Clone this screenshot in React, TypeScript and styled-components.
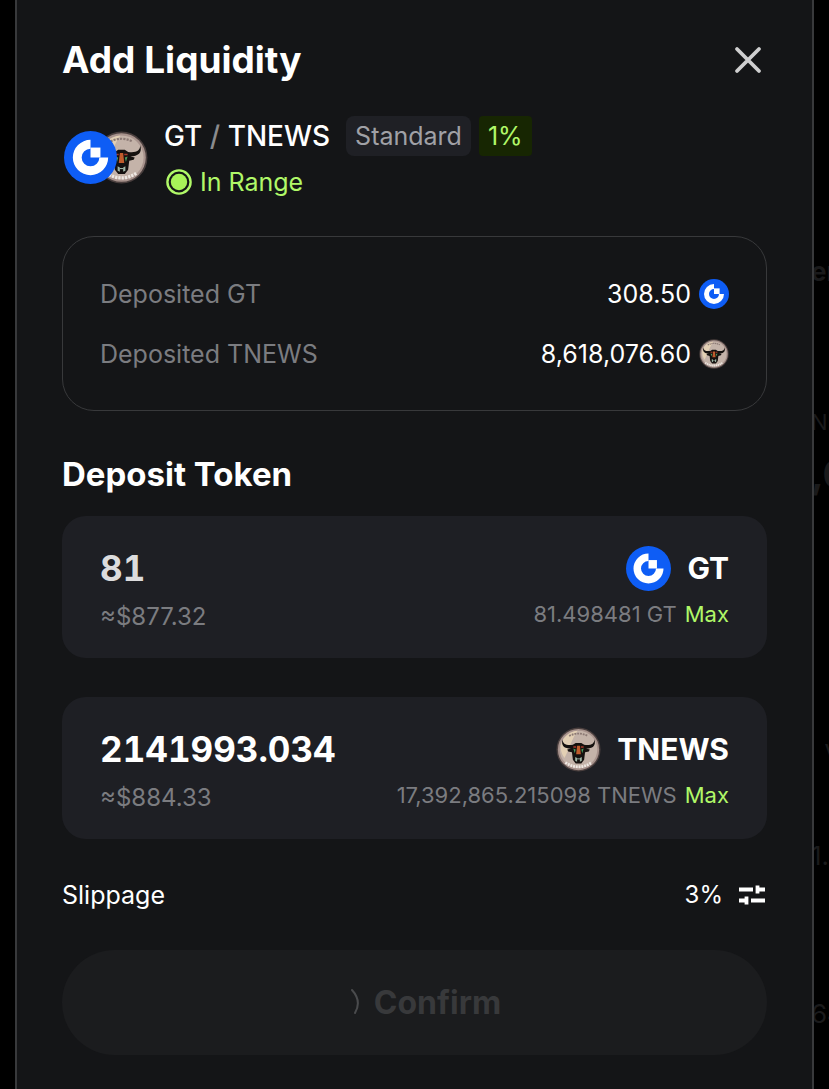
import React from "react";
import styled, { createGlobalStyle, css } from "styled-components";

const GlobalStyle = createGlobalStyle`
  *, *::before, *::after { box-sizing: border-box; }
  body {
    margin: 0;
    background: #000;
    color: #fff;
    font-family: Inter, "Liberation Sans", Arial, sans-serif;
  }
  h1, h2, p, dl, dt, dd { margin: 0; }
  button, input { font-family: inherit; }
`;

const Page = styled.div`
  position: relative;
  min-height: 100vh;
  padding: 0 15px;
  overflow: hidden;
`;

const Modal = styled.main`
  min-height: 100vh;
  padding: 36px 45px 32px;
  background: #141517;
  border: solid #38393b;
  border-width: 0 2px;
`;

const Ghost = styled.span<{ $top: number; $size: number; $bold?: boolean }>`
  position: absolute;
  left: calc(100% - 18px);
  top: ${(p) => p.$top}px;
  z-index: -1;
  font-size: ${(p) => p.$size}px;
  font-weight: ${(p) => (p.$bold ? 700 : 400)};
  line-height: 40px;
  white-space: pre;
  color: #1a1a1b;
`;

const Header = styled.header`
  display: flex;
  align-items: center;
  justify-content: space-between;
  height: 48px;
`;

const Title = styled.h1`
  font-size: 37px;
  line-height: 48px;
  font-weight: 700;
`;

const IconButton = styled.button`
  display: flex;
  padding: 0;
  border: 0;
  background: none;
  color: #fff;
  cursor: pointer;
`;

const CloseButton = styled(IconButton)`
  padding: 4px;
  color: #cfcfd0;
`;

const Pair = styled.section`
  display: flex;
  align-items: center;
  gap: 16px;
  margin-top: 32px;
`;

const PairIcons = styled.div`
  display: flex;
  align-items: center;
  padding: 0 0 2px 2px;
  & > svg:first-child { z-index: 1; }
  & > svg + svg { margin-left: -22px; }
`;

const PairInfo = styled.div`
  display: flex;
  flex-direction: column;
  gap: 8px;
`;

const PairLine = styled.div`
  display: flex;
  align-items: center;
  gap: 8px;
  height: 40px;
`;

const PairName = styled.p`
  margin-right: 8px;
  font-size: 28px;
  line-height: 40px;
  font-weight: 500;
`;

const Slash = styled.span`
  color: #8a8b8e;
`;

const Tag = styled.span<{ $accent?: boolean }>`
  padding: 0 9px;
  border-radius: 8px;
  font-size: 25px;
  line-height: 40px;
  color: #a0a1a6;
  background: #1f2025;
  ${(p) =>
    p.$accent &&
    css`
      border-radius: 4px;
      color: #b0f868;
      background: #172602;
    `}
`;

const Status = styled.p`
  display: flex;
  align-items: center;
  gap: 8px;
  padding-left: 2px;
  font-size: 25px;
  line-height: 36px;
  color: #b0f868;
`;

const Summary = styled.dl`
  display: flex;
  flex-direction: column;
  gap: 24px;
  margin-top: 36px;
  padding: 39px 37px 38px;
  border: 1px solid #38393b;
  border-radius: 32px;
`;

const SummaryRow = styled.div`
  display: flex;
  align-items: center;
  justify-content: space-between;
  font-size: 25px;
  line-height: 36px;
`;

const SummaryLabel = styled.dt`
  color: #7b7c80;
`;

const SummaryValue = styled.dd`
  display: flex;
  align-items: center;
  gap: 8px;
`;

const SectionTitle = styled.h2`
  margin: 39px 0 18px;
  font-size: 33px;
  line-height: 48px;
  font-weight: 700;
`;

const Deposits = styled.div`
  display: flex;
  flex-direction: column;
  gap: 39px;
`;

const DepositCard = styled.div`
  display: flex;
  flex-direction: column;
  gap: 4px;
  padding: 28px 38px 20px;
  border-radius: 24px;
  background: #1e1f24;
`;

const DepositRow = styled.div`
  display: flex;
  align-items: flex-start;
  justify-content: space-between;
  gap: 16px;
`;

const Amount = styled.input<{ $dim?: boolean }>`
  flex: 1;
  min-width: 0;
  height: 48px;
  padding: 0;
  border: 0;
  outline: 0;
  background: none;
  font-size: 35px;
  font-weight: 700;
  font-variant-numeric: tabular-nums;
  color: ${(p) => (p.$dim ? "#dcdcdd" : "#fff")};
`;

const Token = styled.div`
  display: flex;
  align-items: center;
  gap: 16px;
  font-size: 30px;
  line-height: 48px;
  font-weight: 700;
`;

const Fiat = styled.span`
  font-size: 24px;
  line-height: 42px;
  color: #7b7c80;
`;

const Balance = styled.div`
  display: flex;
  align-items: center;
  gap: 8px;
  font-size: 22px;
  line-height: 36px;
  color: #7b7c80;
`;

const MaxButton = styled.button`
  padding: 0;
  border: 0;
  background: none;
  font-size: 22px;
  line-height: 30px;
  color: #b0f868;
  cursor: pointer;
`;

const Slippage = styled.section`
  display: flex;
  align-items: center;
  justify-content: space-between;
  margin-top: 38px;
  font-size: 25px;
  line-height: 36px;
`;

const SlippageValue = styled.div`
  display: flex;
  align-items: center;
  gap: 16px;
  font-size: 24px;
`;

const Confirm = styled.button`
  display: flex;
  align-items: center;
  justify-content: center;
  gap: 14px;
  width: 100%;
  height: 105px;
  margin-top: 37px;
  border: 0;
  border-radius: 53px;
  background: #1b1c1e;
  color: #38393b;
  font-size: 32px;
  font-weight: 700;
`;

type IconProps = { size: number };

const GateIcon = ({ size }: IconProps) => (
  <svg width={size} height={size} viewBox="0 0 48 48" aria-hidden="true">
    <circle cx="24" cy="24" r="24" fill="#0e5df5" />
    <path d="M24 8a16 16 0 1 0 16 16h-8a8 8 0 1 1-8-8z" fill="#fff" />
    <path d="M24 15h9v9h-9z" fill="#fff" />
  </svg>
);

const BullIcon = ({ size }: IconProps) => (
  <svg width={size} height={size} viewBox="0 0 48 48" aria-hidden="true">
    <circle cx="24" cy="24" r="23.500" fill="#4a3f3e" />
    <circle cx="24" cy="24" r="22" fill="#a8938d" />
    <circle cx="24" cy="24" r="20" fill="#c4b3a9" />
    <path d="M5 20a20 20 0 0 1 18-16c-6 8-9 20-14 29a20 20 0 0 1-4-13z" fill="#e3d0b4" />
    <path d="M14 9.500q10-5 20 0" fill="none" stroke="#8c7a75" strokeWidth="2" strokeDasharray="2 1" />
    <path d="M10 38q14 9 28 0" fill="none" stroke="#efe9e4" strokeWidth="3" strokeDasharray="2 1" />
    <path d="M7 13c0 5 4 7 11 6l3-2h6l3 2c7 1 11-1 11-6 2 7-2 10-9 10l4 1-1 2-4 1-1 8-3 4h-6l-3-4-1-8-4-1-1-2 4-1C9 23 5 20 7 13z" fill="#15110f" />
    <path d="M22.500 20h3l1 9h-5z" fill="#c05c2c" />
    <path d="M18.500 23l2.500 1-1 4zM29.500 23l-2.500 1 1 4z" fill="#4a9a60" />
    <path d="M18.500 20.500h3v1.500h-3zM26.500 20.500h3v1.500h-3z" fill="#a83a2c" />
    <path d="M20.500 32l2 1v4l-2-1zM27.500 32l-2 1v4l2-1z" fill="#9eb5a6" />
    <path d="M22.500 33.500h3v1h-3z" fill="#9eb5a6" />
  </svg>
);

const RangeIcon = () => (
  <svg width="26" height="26" viewBox="0 0 26 26" aria-hidden="true">
    <circle cx="13" cy="13" r="11.6" fill="none" stroke="#b0f868" strokeWidth="2.4" />
    <circle cx="13" cy="13" r="8.2" fill="#a8f358" />
  </svg>
);

const CloseIcon = () => (
  <svg width="30" height="30" viewBox="0 0 30 30" aria-hidden="true">
    <path d="M4 4l22 22M26 4L4 26" stroke="currentColor" strokeWidth="3.8" strokeLinecap="round" />
  </svg>
);

const SlidersIcon = () => (
  <svg width="28" height="24" viewBox="0 0 28 24" aria-hidden="true">
    <path
      d="M0 6.500h14M18.500 2.500v8M19 6.500h7M0 17.500h7M7.500 13.500v8M12 17.500h14"
      fill="none"
      stroke="currentColor"
      strokeWidth="3.8"
    />
  </svg>
);

const SpinnerIcon = () => (
  <svg width="32" height="32" viewBox="0 0 32 32" aria-hidden="true">
    <path d="M24 3q10 11 3 23" fill="none" stroke="#4a4b4d" strokeWidth="2" strokeLinecap="round" />
  </svg>
);

const backdrop = [
  { text: "er", top: 252, size: 26, bold: true },
  { text: "N", top: 402, size: 22 },
  { text: ",0", top: 454, size: 38, bold: true },
  { text: "  V", top: 734, size: 24 },
  { text: "1.", top: 836, size: 26 },
  { text: "64", top: 994, size: 26 },
];

const deposits = [
  { symbol: "GT", Icon: GateIcon, amount: "81", dim: true, fiat: "≈$877.32", balance: "81.498481 GT" },
  { symbol: "TNEWS", Icon: BullIcon, amount: "2141993.034", dim: false, fiat: "≈$884.33", balance: "17,392,865.215098 TNEWS" },
];

export default function App() {
  return (
    <Page>
      <GlobalStyle />
      {backdrop.map(({ text, top, size, bold }) => (
        <Ghost key={top} $top={top} $size={size} $bold={bold} aria-hidden="true">
          {text}
        </Ghost>
      ))}
      <Modal>
        <Header>
          <Title>Add Liquidity</Title>
          <CloseButton type="button" aria-label="Close">
            <CloseIcon />
          </CloseButton>
        </Header>

        <Pair>
          <PairIcons>
            <GateIcon size={53} />
            <BullIcon size={53} />
          </PairIcons>
          <PairInfo>
            <PairLine>
              <PairName>
                GT <Slash>/</Slash> TNEWS
              </PairName>
              <Tag>Standard</Tag>
              <Tag $accent>1%</Tag>
            </PairLine>
            <Status>
              <RangeIcon />
              In Range
            </Status>
          </PairInfo>
        </Pair>

        <Summary>
          <SummaryRow>
            <SummaryLabel>Deposited GT</SummaryLabel>
            <SummaryValue>
              308.50
              <GateIcon size={30} />
            </SummaryValue>
          </SummaryRow>
          <SummaryRow>
            <SummaryLabel>Deposited TNEWS</SummaryLabel>
            <SummaryValue>
              8,618,076.60
              <BullIcon size={30} />
            </SummaryValue>
          </SummaryRow>
        </Summary>

        <SectionTitle>Deposit Token</SectionTitle>
        <Deposits>
          {deposits.map(({ symbol, Icon, amount, dim, fiat, balance }) => (
            <DepositCard key={symbol}>
              <DepositRow>
                <Amount defaultValue={amount} $dim={dim} inputMode="decimal" aria-label={`${symbol} amount`} />
                <Token>
                  <Icon size={45} />
                  {symbol}
                </Token>
              </DepositRow>
              <DepositRow>
                <Fiat>{fiat}</Fiat>
                <Balance>
                  {balance}
                  <MaxButton type="button">Max</MaxButton>
                </Balance>
              </DepositRow>
            </DepositCard>
          ))}
        </Deposits>

        <Slippage>
          <span>Slippage</span>
          <SlippageValue>
            3%
            <IconButton type="button" aria-label="Slippage settings">
              <SlidersIcon />
            </IconButton>
          </SlippageValue>
        </Slippage>

        <Confirm type="button" disabled>
          <SpinnerIcon />
          Confirm
        </Confirm>
      </Modal>
    </Page>
  );
}
